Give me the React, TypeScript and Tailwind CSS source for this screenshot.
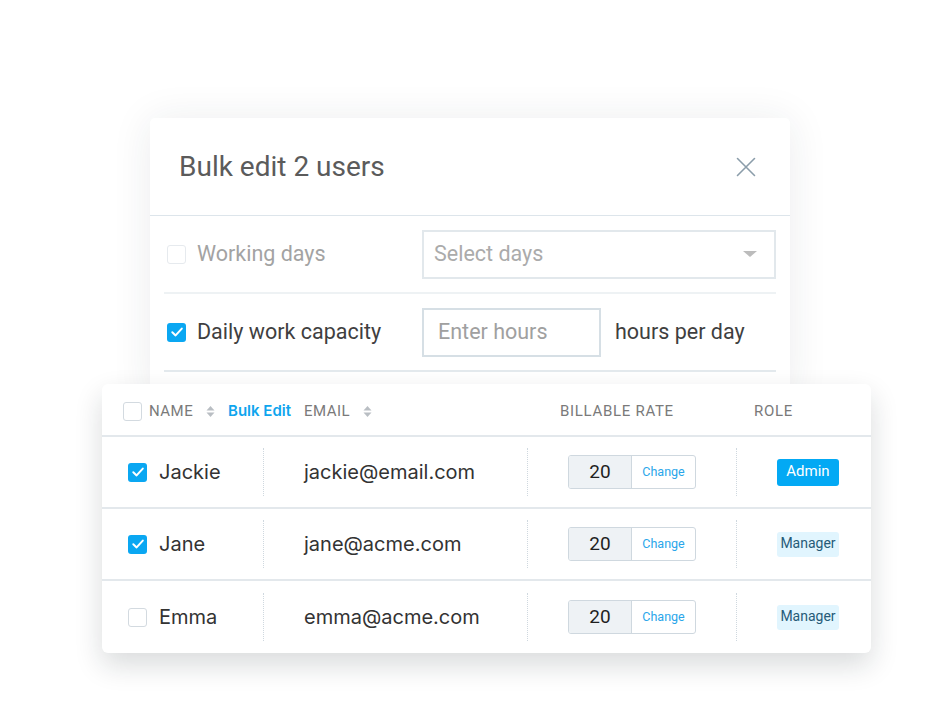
import React from "react";

const users = [
  { name: "Jackie", email: "jackie@email.com", rate: 20, role: "Admin", checked: true },
  { name: "Jane", email: "jane@acme.com", rate: 20, role: "Manager", checked: true },
  { name: "Emma", email: "emma@acme.com", rate: 20, role: "Manager", checked: false },
];

function Checkbox({ checked, muted }: { checked: boolean; muted?: boolean }) {
  if (checked) {
    return (
      <span className="flex h-[19px] w-[19px] shrink-0 items-center justify-center rounded-[3px] bg-[#0aa7f2]">
        <svg width="14" height="14" viewBox="0 0 14 14" fill="none" aria-hidden="true">
          <path d="M2.3 7.3 5.6 10.4 11.8 3.6" stroke="#fff" strokeWidth="2" strokeLinecap="round" strokeLinejoin="round" />
        </svg>
      </span>
    );
  }
  return (
    <span
      className={`block h-[19px] w-[19px] shrink-0 rounded-[3px] border bg-white ${
        muted ? "border-[#e6eaee]" : "border-[#d3dae0]"
      }`}
    />
  );
}

function SortIcon() {
  return (
    <svg width="9" height="13" viewBox="0 0 9 13" aria-hidden="true">
      <path d="M4.5 1 8.5 5.5H0.5Z" fill="#b9bec3" />
      <path d="M4.5 12 8.5 7.5H0.5Z" fill="#b9bec3" />
    </svg>
  );
}

function DottedDivider() {
  return <div className="h-[48px] w-0 border-l border-dotted border-[#cfd8df]" />;
}

function BulkEditModal() {
  return (
    <div className="ml-[150px] w-[640px] rounded-[5px] bg-white pb-[28px] shadow-[0_2px_40px_rgba(30,40,50,0.09)] font-['Roboto',sans-serif]">
      <div className="flex h-[98px] items-center justify-between border-b border-[#dde5eb] pl-[29px] pr-[34px]">
        <h2 className="pt-[1px] text-[28px] font-normal text-[#5b5b5b]">Bulk edit 2 users</h2>
        <svg width="20" height="20" viewBox="0 0 20 20" aria-hidden="true">
          <path d="M1.5 1.5 18.5 18.5M18.5 1.5 1.5 18.5" stroke="#8b9daa" strokeWidth="1.6" strokeLinecap="round" />
        </svg>
      </div>
      <div className="px-[14px]">
        <div className="flex h-[78px] items-center border-b-2 border-[#eef2f4] pl-[3px]">
          <Checkbox checked={false} muted />
          <span className="ml-[11px] w-[225px] pt-[1px] text-[21.5px] text-[#a3a3a3]">Working days</span>
          <div className="flex h-[49px] w-[354px] items-center justify-between border-2 border-[#e2e8ec] pl-[10px] pr-[17px]">
            <span className="pt-[1px] text-[21.5px] text-[#ababab]">Select days</span>
            <svg width="14" height="6" viewBox="0 0 14 6" aria-hidden="true">
              <path d="M0 0H14L7 6Z" fill="#bcbcbc" />
            </svg>
          </div>
        </div>
        <div className="flex h-[78px] items-center border-b-2 border-[#e4eaee] pl-[3px]">
          <Checkbox checked />
          <span className="ml-[11px] w-[225px] pt-[1px] text-[21.5px] text-[#3f3f3f]">Daily work capacity</span>
          <div className="flex h-[49px] w-[179px] items-center border-2 border-[#d6dfe5] pl-[14px]">
            <span className="pt-[1px] text-[21.5px] text-[#a0a0a0]">Enter hours</span>
          </div>
          <span className="ml-[14px] pt-[1px] text-[21.5px] text-[#3f3f3f]">hours per day</span>
        </div>
      </div>
    </div>
  );
}

function UsersTable() {
  return (
    <div className="relative z-10 ml-[102px] -mt-[16px] w-[769px] rounded-[6px] bg-white shadow-[0_12px_28px_rgba(20,30,40,0.16)]">
      <div className="grid h-[53px] grid-cols-[105px_76px_256px_194px_1fr] items-center border-b-2 border-[#e3e8ec] pl-[21px] pt-[4px] text-[15px] font-['Roboto',sans-serif] text-[#7a7a7a]">
        <div className="flex items-center">
          <Checkbox checked={false} />
          <span className="ml-[7px] tracking-[0.5px]">NAME</span>
          <span className="ml-[13px] flex">
            <SortIcon />
          </span>
        </div>
        <span className="text-[15px] font-semibold text-[#0ea5ee] font-['Inter',sans-serif]">Bulk Edit</span>
        <div className="flex items-center">
          <span className="tracking-[0.5px]">EMAIL</span>
          <span className="ml-[13px] flex">
            <SortIcon />
          </span>
        </div>
        <span className="tracking-[0.7px]">BILLABLE RATE</span>
        <span className="tracking-[0.7px]">ROLE</span>
      </div>
      {users.map((user, index) => (
        <div
          key={user.email}
          className={`flex h-[72px] items-center ${
            index < users.length - 1 ? "border-b-2 border-[#e3e8ec]" : ""
          }`}
        >
          <div className="flex w-[161px] items-center pl-[26px]">
            <Checkbox checked={user.checked} />
            <span className="ml-[12px] text-[20px] text-[#333] font-['Inter',sans-serif]">{user.name}</span>
          </div>
          <DottedDivider />
          <div className="w-[263px] pl-[40px] text-[20px] text-[#333] font-['Inter',sans-serif]">
            {user.email}
          </div>
          <DottedDivider />
          <div className="w-[208px] pl-[40px]">
            <div className="flex h-[34px] w-[128px] overflow-hidden rounded-[3px] border border-[#cfd8df] font-['Roboto',sans-serif]">
              <div className="flex w-[63px] items-center justify-center border-r border-[#cfd8df] bg-[#eef2f5] text-[19px] text-[#1f1f1f]">
                {user.rate}
              </div>
              <div className="flex flex-1 items-center justify-center text-[12.5px] text-[#2aa6ea]">Change</div>
            </div>
          </div>
          <DottedDivider />
          <div className="pl-[40px] font-['Roboto',sans-serif]">
            {user.role === "Admin" ? (
              <span className="flex h-[27px] w-[62px] items-center justify-center rounded-[3px] bg-[#03a9f4] pb-[2px] text-[15px] text-white">
                Admin
              </span>
            ) : (
              <span className="flex h-[25px] w-[62px] items-center justify-center rounded-[3px] bg-[#e1f5fe] pb-[2px] text-[14px] text-[#265b78]">
                Manager
              </span>
            )}
          </div>
        </div>
      ))}
    </div>
  );
}

export default function App() {
  return (
    <div className="h-[720px] w-[940px] overflow-hidden bg-white pt-[118px]">
      <BulkEditModal />
      <UsersTable />
    </div>
  );
}
